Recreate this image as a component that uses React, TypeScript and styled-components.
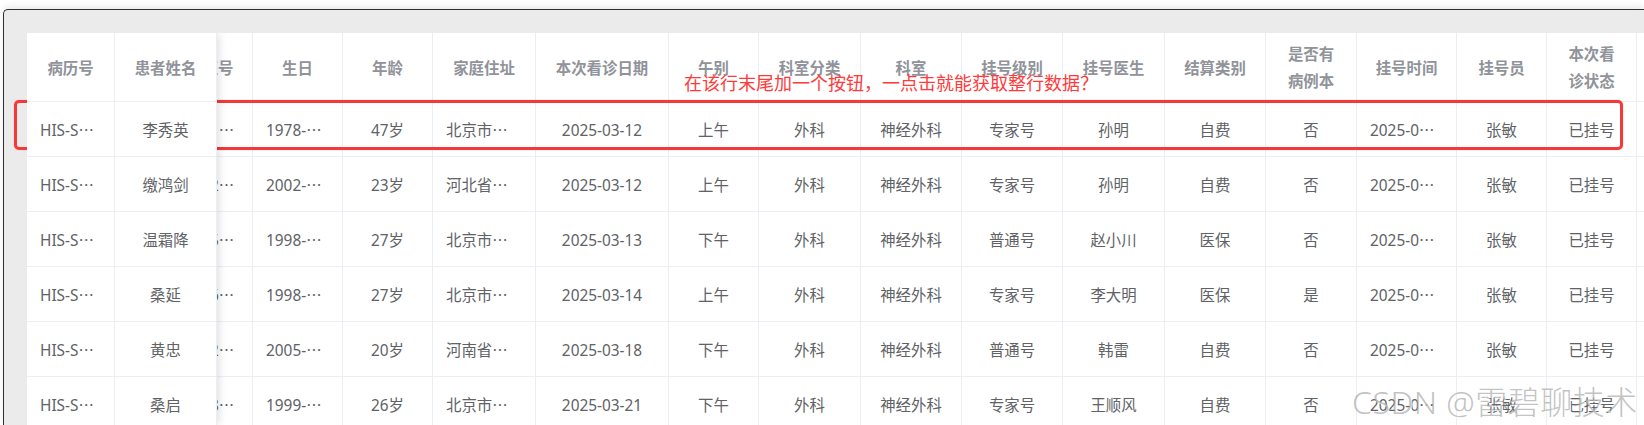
import React from "react";
import styled, { createGlobalStyle } from "styled-components";

const GlobalStyle = createGlobalStyle`
  html, body { margin: 0; padding: 0; background: #ffffff; }
  body { width: 1644px; height: 425px; overflow: hidden; }
`;

const Screen = styled.div`
  position: relative;
  width: 1644px;
  height: 425px;
  box-sizing: border-box;
  padding: 9px 0 0 3px;
  background: #ffffff;
  overflow: hidden;
`;

const Window = styled.div`
  height: 100%;
  box-sizing: border-box;
  padding: 23px 0 0 23px;
  background: #ebebeb;
  border-top: 1px solid #2f2f2f;
  border-left: 1px solid #2f2f2f;
  border-top-left-radius: 5px;
  box-shadow: 0 -3px 7px rgba(0, 0, 0, 0.08);
`;

const Table = styled.div`
  display: flex;
  height: 100%;
  background: #ffffff;
  overflow: hidden;
`;

const FixedPane = styled.div`
  flex: none;
  position: relative;
  z-index: 1;
  background: #ffffff;
  box-shadow: 3px 0 8px -1px rgba(0, 0, 0, 0.13);
`;

const ScrollPane = styled.div`
  flex: 1;
  min-width: 0;
  overflow: hidden;
`;

const ScrollTrack = styled.div<{ $offset: number }>`
  width: max-content;
  margin-left: ${(p) => -p.$offset}px;
`;

const Row = styled.div<{ $cols: string }>`
  display: grid;
  grid-template-columns: ${(p) => p.$cols};
`;

const HeadCell = styled.div`
  height: 69px;
  box-sizing: border-box;
  padding: 0 13px;
  display: flex;
  align-items: center;
  justify-content: center;
  text-align: center;
  border-right: 1px solid #ebeef5;
  border-bottom: 1px solid #ebeef5;
  font-family: "Noto Sans CJK SC", "Noto Sans", sans-serif;
  font-size: 15.4px;
  font-weight: 700;
  line-height: 27px;
  color: #909399;
  white-space: pre-line;
  overflow: hidden;
`;

const BodyCell = styled.div`
  height: 55px;
  box-sizing: border-box;
  padding: 0 13px;
  border-right: 1px solid #ebeef5;
  border-bottom: 1px solid #ebeef5;
  font-family: "Noto Sans CJK SC", sans-serif;
  font-size: 15.4px;
  line-height: 54px;
  color: #606266;
  text-align: center;
  white-space: nowrap;
  overflow: hidden;
  text-overflow: ellipsis;
`;

const CellText = styled.span`
  font-family: "Noto Sans", "Noto Sans CJK SC", sans-serif;
`;

const RowHighlight = styled.div`
  position: absolute;
  left: 14px;
  top: 100px;
  width: 1609px;
  height: 50px;
  box-sizing: border-box;
  border: 3px solid #f73838;
  border-radius: 5px;
  pointer-events: none;
  box-shadow: 0 0 1px rgba(247, 56, 56, 0.6);
`;

const Annotation = styled.div`
  position: absolute;
  left: 684px;
  top: 72px;
  font-family: "Noto Sans CJK SC", sans-serif;
  font-size: 18px;
  font-weight: 400;
  line-height: 20px;
  color: #ff3a3a;
  white-space: nowrap;
`;

const Watermark = styled.div`
  position: absolute;
  left: 1352px;
  top: 384px;
  font-family: "Noto Sans", "Noto Sans CJK SC", sans-serif;
  font-size: 32px;
  font-weight: 300;
  letter-spacing: 0.5px;
  line-height: 36px;
  color: rgba(135, 135, 135, 0.5);
  text-shadow: 1px 1px 1px rgba(255, 255, 255, 0.85);
  white-space: nowrap;
  pointer-events: none;
`;

type Patient = {
  id: string;
  name: string;
  idCard: string;
  birth: string;
  age: string;
  address: string;
  visitDate: string;
  period: string;
  deptType: string;
  dept: string;
  level: string;
  doctor: string;
  settle: string;
  hasBook: string;
  regTime: string;
  clerk: string;
  status: string;
  remark: string;
};

const patients: Patient[] = [
  { id: "HIS-S20250312001", name: "李秀英", idCard: "110101197805121234", birth: "1978-05-12", age: "47岁", address: "北京市朝阳区建国路88号", visitDate: "2025-03-12", period: "上午", deptType: "外科", dept: "神经外科", level: "专家号", doctor: "孙明", settle: "自费", hasBook: "否", regTime: "2025-03-12 08:30:00", clerk: "张敏", status: "已挂号", remark: "" },
  { id: "HIS-S20250312002", name: "缴鸿剑", idCard: "130102200208154321", birth: "2002-08-15", age: "23岁", address: "河北省石家庄市长安区", visitDate: "2025-03-12", period: "上午", deptType: "外科", dept: "神经外科", level: "专家号", doctor: "孙明", settle: "自费", hasBook: "否", regTime: "2025-03-12 09:10:00", clerk: "张敏", status: "已挂号", remark: "" },
  { id: "HIS-S20250313001", name: "温霜降", idCard: "110105199810231122", birth: "1998-10-23", age: "27岁", address: "北京市海淀区中关村大街", visitDate: "2025-03-13", period: "下午", deptType: "外科", dept: "神经外科", level: "普通号", doctor: "赵小川", settle: "医保", hasBook: "否", regTime: "2025-03-13 13:20:00", clerk: "张敏", status: "已挂号", remark: "" },
  { id: "HIS-S20250314001", name: "桑延", idCard: "110106199801053344", birth: "1998-01-05", age: "27岁", address: "北京市丰台区南三环西路", visitDate: "2025-03-14", period: "上午", deptType: "外科", dept: "神经外科", level: "专家号", doctor: "李大明", settle: "医保", hasBook: "是", regTime: "2025-03-14 08:05:00", clerk: "张敏", status: "已挂号", remark: "" },
  { id: "HIS-S20250318001", name: "黄忠", idCard: "410102200506175566", birth: "2005-06-17", age: "20岁", address: "河南省郑州市金水区", visitDate: "2025-03-18", period: "下午", deptType: "外科", dept: "神经外科", level: "普通号", doctor: "韩雷", settle: "自费", hasBook: "否", regTime: "2025-03-18 14:00:00", clerk: "张敏", status: "已挂号", remark: "" },
  { id: "HIS-S20250321001", name: "桑启", idCard: "110108199903087788", birth: "1999-03-08", age: "26岁", address: "北京市西城区金融街", visitDate: "2025-03-21", period: "下午", deptType: "外科", dept: "神经外科", level: "专家号", doctor: "王顺风", settle: "自费", hasBook: "否", regTime: "2025-03-21 15:30:00", clerk: "张敏", status: "已挂号", remark: "" },
];

type Column = { key: keyof Patient; title: string; width: number };

const fixedColumns: Column[] = [
  { key: "id", title: "病历号", width: 88 },
  { key: "name", title: "患者姓名", width: 102 },
];

const scrollColumns: Column[] = [
  { key: "idCard", title: "身份证号", width: 100 },
  { key: "birth", title: "生日", width: 90 },
  { key: "age", title: "年龄", width: 90 },
  { key: "address", title: "家庭住址", width: 103 },
  { key: "visitDate", title: "本次看诊日期", width: 133 },
  { key: "period", title: "午别", width: 90 },
  { key: "deptType", title: "科室分类", width: 102 },
  { key: "dept", title: "科室", width: 101 },
  { key: "level", title: "挂号级别", width: 101 },
  { key: "doctor", title: "挂号医生", width: 102 },
  { key: "settle", title: "结算类别", width: 101 },
  { key: "hasBook", title: "是否有\n病例本", width: 91 },
  { key: "regTime", title: "挂号时间", width: 100 },
  { key: "clerk", title: "挂号员", width: 90 },
  { key: "status", title: "本次看\n诊状态", width: 90 },
  { key: "remark", title: "备注", width: 120 },
];

const template = (cols: Column[]) => cols.map((c) => `${c.width}px`).join(" ");

function TablePart({ columns }: { columns: Column[] }) {
  const cols = template(columns);
  return (
    <>
      <Row $cols={cols}>
        {columns.map((c) => (
          <HeadCell key={c.key}>{c.title}</HeadCell>
        ))}
      </Row>
      {patients.map((p) => (
        <Row $cols={cols} key={p.id}>
          {columns.map((c) => (
            <BodyCell key={c.key}>
              <CellText>{p[c.key]}</CellText>
            </BodyCell>
          ))}
        </Row>
      ))}
    </>
  );
}

export default function App() {
  return (
    <>
      <GlobalStyle />
      <Screen>
        <Window>
          <Table>
            <FixedPane>
              <TablePart columns={fixedColumns} />
            </FixedPane>
            <ScrollPane>
              <ScrollTrack $offset={64}>
                <TablePart columns={scrollColumns} />
              </ScrollTrack>
            </ScrollPane>
          </Table>
        </Window>
        <RowHighlight />
        <Annotation>在该行末尾加一个按钮，一点击就能获取整行数据？</Annotation>
        <Watermark>CSDN @雷碧聊技术</Watermark>
      </Screen>
    </>
  );
}
